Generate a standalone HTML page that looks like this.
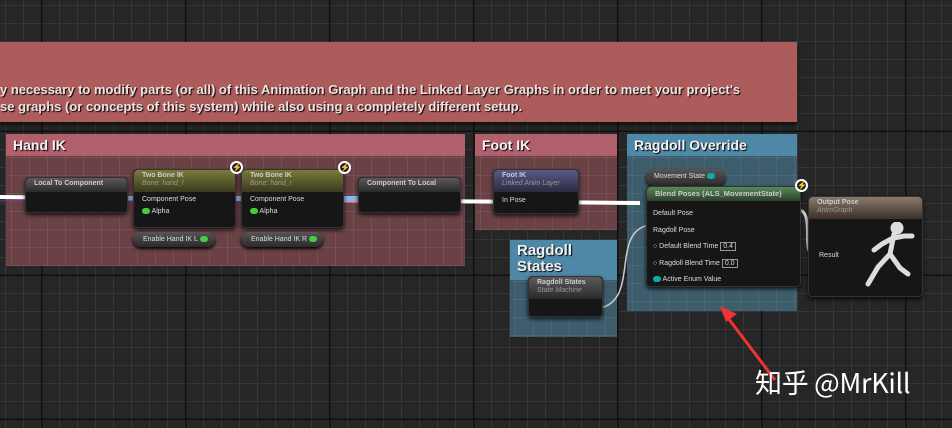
<!DOCTYPE html><html><head><meta charset="utf-8"><style>
*{margin:0;padding:0;box-sizing:border-box}
body{width:952px;height:428px;overflow:hidden;position:relative;font-family:"Liberation Sans",sans-serif;
background-color:#262626;
background-image:
linear-gradient(90deg,rgba(12,12,12,.9) 1.5px,transparent 1.5px),
linear-gradient(0deg,rgba(12,12,12,.9) 1.5px,transparent 1.5px),
linear-gradient(90deg,#363636 1px,transparent 1px),
linear-gradient(0deg,#363636 1px,transparent 1px);
background-size:144px 144px,144px 144px,18px 18px,18px 18px;
background-position:41px 0,0 132px,5px 0,0 6px}
.a{position:absolute}
.cm{background:#ad5c5c;box-shadow:0 3px 4px rgba(0,0,0,.6)}
.grp{position:absolute;background-image:linear-gradient(90deg,rgba(255,255,255,.07) 1px,transparent 1px),linear-gradient(0deg,rgba(255,255,255,.07) 1px,transparent 1px);background-size:18px 18px;background-position:5px 6px}
.gh{position:absolute;left:0;right:0;top:0;color:#f2f2f2;font-weight:bold;text-shadow:1px 1px 1px #000;font-size:14px;padding:3px 7px}
.node{position:absolute;background:#161616;border-radius:4px;box-shadow:0 2px 4px rgba(0,0,0,.8);font-size:7px;color:#ddd;border:1px solid #333}
.nh{height:14px;border-radius:4px 4px 0 0;padding:2px 8px;font-weight:bold;color:#ccc;font-size:7px;background:linear-gradient(#5a5a5a,#2a2a2a)}
.sub{font-style:italic;color:#999;font-weight:normal;display:block;margin-top:1px}
.pill{position:absolute;border-radius:9px;background:linear-gradient(#555,#2a2a2a);color:#ddd;font-size:7px;padding:4px 10px;box-shadow:0 2px 3px #000;white-space:nowrap}
.g{display:inline-block;width:8px;height:6px;border-radius:3px;background:#4c4;vertical-align:middle}
.bolt{position:absolute;width:13px;height:13px;border-radius:50%;border:2px solid #fff;background:#222;color:#fff;font-size:8px;text-align:center;line-height:9px}
</style></head><body>
<div class="a cm" style="left:0;top:42px;width:797px;height:80px"></div>
<div class="a" style="left:0;top:81px;color:#efe2e2;font-weight:bold;font-size:13px;line-height:17px;text-shadow:1px 1px 1px #000;white-space:nowrap">y necessary to modify parts (or all) of this Animation Graph and the Linked Layer Graphs in order to meet your project's<br>se graphs (or concepts of this system) while also using a completely different setup.</div>

<div class="grp" style="left:6px;top:134px;width:459px;height:132px;background-color:#6a4246"><div class="gh" style="background:#b0606a;height:22px">Hand IK</div></div>
<div class="grp" style="left:475px;top:134px;width:142px;height:96px;background-color:#6a4246"><div class="gh" style="background:#b0606a;height:22px">Foot IK</div></div>
<div class="grp" style="left:627px;top:134px;width:170px;height:177px;background-color:#3d5d6c"><div class="gh" style="background:#4f88a6;height:22px">Ragdoll Override</div></div>
<div class="grp" style="left:510px;top:240px;width:107px;height:97px;background-color:#3d5d6c"><div class="gh" style="background:#4f88a6;height:40px;font-size:15px;line-height:16px">Ragdoll<br>States</div></div>

<svg class="a" style="left:0;top:0" width="952" height="428">
<path d="M0 197 L640 203" stroke="#fff" stroke-width="4" fill="none"/>
<path d="M120 198 L360 198" stroke="#8ab8f0" stroke-width="4"/>
<path d="M0 201 L460 201" stroke="#7a3a9a" stroke-width="1"/>
<path d="M600 308 C640 300 610 230 650 225" stroke="#ccc" stroke-width="1.5" fill="none"/>
<path d="M800 210 C815 215 800 255 815 255" stroke="#ddd" stroke-width="3" fill="none"/>
<path d="M775 380 L728 318" stroke="#e33" stroke-width="3"/>
<path d="M720 306 L737 314 L726 322 Z" fill="#e33"/>
</svg>

<div class="node" style="left:25px;top:177px;width:103px;height:36px"><div class="nh">Local To Component</div></div>
<div class="node" style="left:133px;top:169px;width:103px;height:59px"><div class="nh" style="height:22px;background:linear-gradient(#7a7a3a,#3a3a20)">Two Bone IK<span class="sub">Bone: hand_l</span></div><div style="padding:4px 8px">Component Pose</div><div style="padding:1px 8px"><span class="g"></span> Alpha</div></div>
<div class="node" style="left:241px;top:169px;width:103px;height:59px"><div class="nh" style="height:22px;background:linear-gradient(#7a7a3a,#3a3a20)">Two Bone IK<span class="sub">Bone: hand_r</span></div><div style="padding:4px 8px">Component Pose</div><div style="padding:1px 8px"><span class="g"></span> Alpha</div></div>
<div class="bolt" style="left:230px;top:161px">⚡</div><div class="bolt" style="left:338px;top:161px">⚡</div>
<div class="node" style="left:358px;top:177px;width:103px;height:36px"><div class="nh">Component To Local</div></div>
<div class="pill" style="left:133px;top:232px;width:82px">Enable Hand IK L <span class="g"></span></div>
<div class="pill" style="left:241px;top:232px;width:82px">Enable Hand IK R <span class="g"></span></div>

<div class="node" style="left:493px;top:169px;width:86px;height:45px"><div class="nh" style="height:22px;background:linear-gradient(#5a5a8a,#2a2a40)">Foot IK<span class="sub">Linked Anim Layer</span></div><div style="padding:5px 8px">In Pose</div></div>
<div class="node" style="left:528px;top:276px;width:75px;height:41px"><div class="nh" style="height:22px">Ragdoll States<span class="sub">State Machine</span></div></div>

<div class="pill" style="left:646px;top:169px;width:79px;height:17px;padding:4px 8px">Movement State <span class="g" style="background:#1aa"></span></div>
<div class="node" style="left:646px;top:186px;width:155px;height:101px"><div class="nh" style="font-size:7.5px;background:linear-gradient(#5a8a5a,#2a402a)">Blend Poses (ALS_MovementState)</div>
<div style="padding:5px 6px;line-height:16.5px">Default Pose<br>Ragdoll Pose<br>○ Default Blend Time <span style="border:1px solid #999;padding:0 2px">0.4</span><br>○ Ragdoll Blend Time <span style="border:1px solid #999;padding:0 2px">0.0</span><br><span class="g" style="background:#1aa"></span> Active Enum Value</div></div>
<div class="bolt" style="left:795px;top:179px">⚡</div>
<div class="node" style="left:808px;top:196px;width:115px;height:101px"><div class="nh" style="height:22px;background:linear-gradient(#8a7a6a,#3a3028)">Output Pose<span class="sub">AnimGraph</span></div><div style="position:absolute;left:10px;top:55px">Result</div>
<svg class="a" style="left:55px;top:25px" width="55" height="70"><g stroke="#ddd" stroke-width="5" stroke-linecap="round" fill="none"><circle cx="33" cy="6" r="4" fill="#ddd"/><path d="M30 12 L26 32 L14 45 L4 62 M26 32 L36 46 L44 52 M29 16 L18 22 L10 28 M30 16 L40 14 L48 14"/></g></svg></div>

<div class="a" style="left:755px;top:362px;color:#fff;font-size:27px;font-family:'Noto Sans CJK SC',sans-serif;font-weight:400;white-space:nowrap;letter-spacing:-0.3px">知乎 @MrKill</div>
</body></html>
